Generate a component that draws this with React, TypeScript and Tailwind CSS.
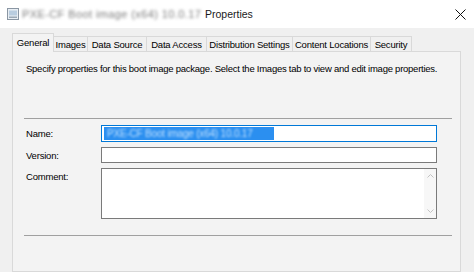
import React from "react";

const tabs = [
  { label: "Images", w: 34 },
  { label: "Data Source", w: 59 },
  { label: "Data Access", w: 60 },
  { label: "Distribution Settings", w: 86 },
  { label: "Content Locations", w: 78 },
  { label: "Security", w: 41 },
];

export default function App() {
  return (
    <div className="w-[474px] h-[272px] overflow-hidden bg-[#f0f0f0] text-black flex flex-col font-['Liberation_Sans',Arial,sans-serif] text-[9.5px] leading-[13px] tracking-[-0.2px]">
      {/* Title bar */}
      <div className="h-[28px] bg-white flex items-center shrink-0">
        <svg width="12" height="12" viewBox="0 0 12 12" className="ml-[7px] shrink-0">
          <rect x="0.5" y="0.5" width="11" height="11" fill="#e8eef4" stroke="#8a96a3" />
          <rect x="2" y="2.5" width="8" height="5" fill="#b9cde0" />
          <rect x="2" y="8.5" width="8" height="1.5" fill="#9aa8b5" />
        </svg>
        <div className="ml-[3px] w-[180px] shrink-0">
          <span className="block whitespace-nowrap text-[#7d7d7d] blur-[1.4px] text-[11px] tracking-[0.4px]">
            PXE-CF Boot image (x64) 10.0.17
          </span>
        </div>
        <span className="ml-[3px] text-[10.5px] tracking-normal text-[#1a1a1a]">Properties</span>
        <div className="flex-1" />
        <svg width="11" height="11" viewBox="0 0 11 11" className="mr-[8px]">
          <path d="M0.5 0.5 L10.5 10.5 M10.5 0.5 L0.5 10.5" stroke="#111" strokeWidth="1" />
        </svg>
      </div>

      {/* Body */}
      <div className="flex-1 flex flex-col pl-[12px] pr-[13px] pt-[5px]">
        {/* Tabs */}
        <div className="flex items-end h-[19px] relative z-10 -mb-px">
          <div className="h-[19px] w-[42px] border border-b-0 border-[#d9d9d9] bg-[#f3f3f3] flex items-center justify-center pb-[1px]">
            General
          </div>
          {tabs.map((t) => (
            <div
              key={t.label}
              style={{ width: t.w }}
              className="h-[16px] border-t border-r border-b border-[#d9d9d9] bg-[#f0f0f0] flex items-center justify-center whitespace-nowrap"
            >
              {t.label}
            </div>
          ))}
        </div>

        {/* Panel */}
        <div className="flex-1 border border-[#d9d9d9] bg-[#f3f3f3] pl-[13px] pr-[8px] pt-[10px] flex flex-col">
          <div className="whitespace-nowrap tracking-[-0.25px]">
            Specify properties for this boot image package. Select the Images tab to view and edit image properties.
          </div>

          <div className="mt-[43px] -ml-[2px] border-t border-[#a0a0a0]" />

          <div className="mt-[6px] grid grid-cols-[75px_336px] gap-y-[5px]">
            <div className="flex items-center h-[17px]">Name:</div>
            <div className="h-[17px] border border-[#0078d7] bg-white flex items-center px-[2px]">
              <span className="h-[13px] w-[170px] bg-[#2b8ff0] overflow-hidden whitespace-nowrap">
                <span className="block text-[#bfe0ff] blur-[1.2px] text-[10px] leading-[13px] pl-[3px]">
                  PXE-CF Boot image (x64) 10.0.17
                </span>
              </span>
            </div>

            <div className="flex items-center h-[16px]">Version:</div>
            <div className="h-[16px] border border-[#7a7a7a] bg-white" />

            <div className="pt-[2px]">Comment:</div>
            <div className="h-[51px] border border-[#7a7a7a] bg-white flex justify-end">
              <div className="w-[12px] h-full bg-[#f7f7f7] flex flex-col items-center justify-between py-[5px]">
                <svg width="7" height="4" viewBox="0 0 7 4">
                  <path d="M0.5 3.5 L3.5 0.5 L6.5 3.5" stroke="#c2c2c2" fill="none" />
                </svg>
                <svg width="7" height="4" viewBox="0 0 7 4">
                  <path d="M0.5 0.5 L3.5 3.5 L6.5 0.5" stroke="#c2c2c2" fill="none" />
                </svg>
              </div>
            </div>
          </div>

          <div className="mt-[16px] -ml-[2px] border-t border-[#a0a0a0]" />
        </div>
      </div>
    </div>
  );
}
